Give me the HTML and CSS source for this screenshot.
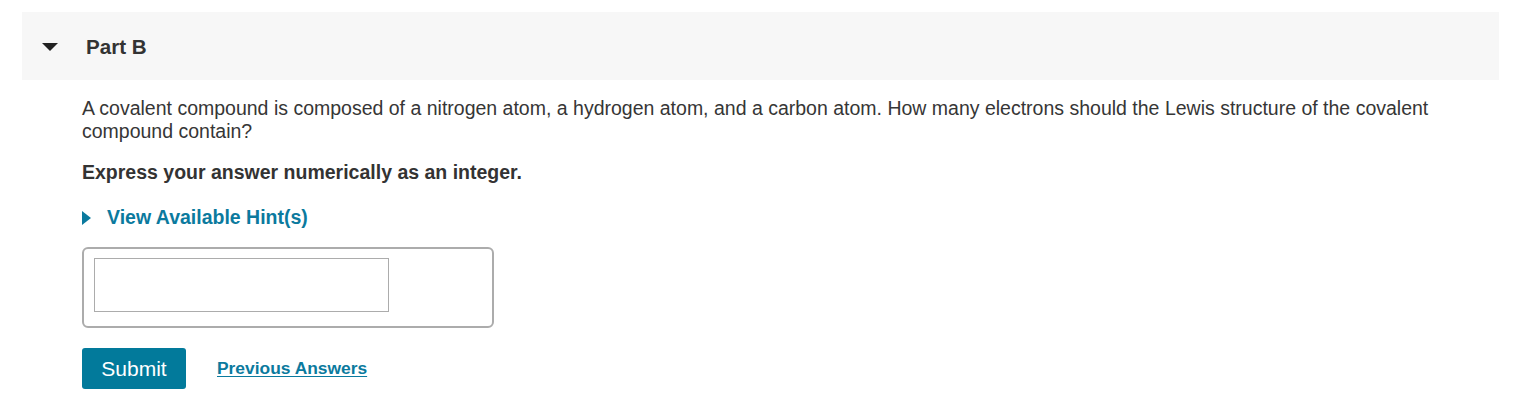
FILE: index.html
```html
<!DOCTYPE html>
<html lang="en">
<head>
<meta charset="utf-8">
<title>Part B</title>
<link rel="stylesheet" href="styles.css">
</head>
<body>
<div class="page">
  <div class="part-header">
    <span class="caret-down" aria-hidden="true"></span>
    <h2 class="part-title">Part B</h2>
  </div>
  <div class="part-body">
    <p class="question">A covalent compound is composed of a nitrogen atom, a hydrogen atom, and a carbon atom. How many electrons should the Lewis structure of the covalent compound contain?</p>
    <p class="instruction">Express your answer numerically as an integer.</p>
    <a class="hint-toggle" href="#"><span class="caret-right" aria-hidden="true"></span>View Available Hint(s)</a>
    <div class="answer-box">
      <input class="answer-input" type="text" aria-label="Answer">
    </div>
    <div class="actions">
      <button class="submit-btn" type="button">Submit</button>
      <a class="prev-link" href="#">Previous Answers</a>
    </div>
  </div>
</div>
</body>
</html>
```

FILE: styles.css
```css
html, body {
  margin: 0;
  padding: 0;
  background: #ffffff;
}

body {
  font-family: "Liberation Sans", Arial, Helvetica, sans-serif;
  color: #363636;
  font-size: 19.5px;
  line-height: 23px;
}

.page {
  padding: 12px 14px 0 22px;
}

.part-header {
  height: 68px;
  background: #f7f7f7;
  display: flex;
  align-items: center;
  padding-left: 20px;
}

.caret-down {
  width: 0;
  height: 0;
  border-left: 8px solid transparent;
  border-right: 8px solid transparent;
  border-top: 8px solid #222222;
  margin-right: 28px;
  margin-top: 1px;
}

.part-title {
  margin: 0;
  padding-top: 2px;
  font-size: 20.6px;
  font-weight: bold;
  color: #333333;
  line-height: 24px;
}

.part-body {
  padding: 17px 60px 0 60px;
}

.question {
  margin: 0;
}

.instruction {
  margin: 18px 0 0 0;
  font-weight: bold;
  color: #333333;
}

.hint-toggle {
  display: flex;
  align-items: center;
  margin-top: 22px;
  font-weight: bold;
  color: #0b7a9e;
  text-decoration: none;
  width: max-content;
}

.caret-right {
  width: 0;
  height: 0;
  border-top: 7px solid transparent;
  border-bottom: 7px solid transparent;
  border-left: 9px solid #0b7a9e;
  margin-right: 16px;
}

.answer-box {
  box-sizing: border-box;
  margin-top: 18px;
  width: 412px;
  height: 81px;
  border: 2px solid #acacac;
  border-radius: 6px;
  padding: 9px 0 0 10px;
}

.answer-input {
  display: block;
  box-sizing: border-box;
  width: 295px;
  height: 54px;
  margin: 0;
  border: 1px solid #acacac;
  border-radius: 0;
  padding: 0 6px;
  font: inherit;
  background: #ffffff;
  outline: none;
}

.actions {
  display: flex;
  align-items: center;
  margin-top: 20px;
}

.submit-btn {
  width: 104px;
  height: 41px;
  border: none;
  border-radius: 3px;
  background: #027a9b;
  color: #ffffff;
  font-family: inherit;
  font-size: 21px;
  padding: 0;
  cursor: pointer;
}

.prev-link {
  margin-left: 31px;
  font-size: 17.4px;
  font-weight: bold;
  color: #0b7a9e;
  text-decoration: underline;
  text-underline-offset: 2px;
}
```
